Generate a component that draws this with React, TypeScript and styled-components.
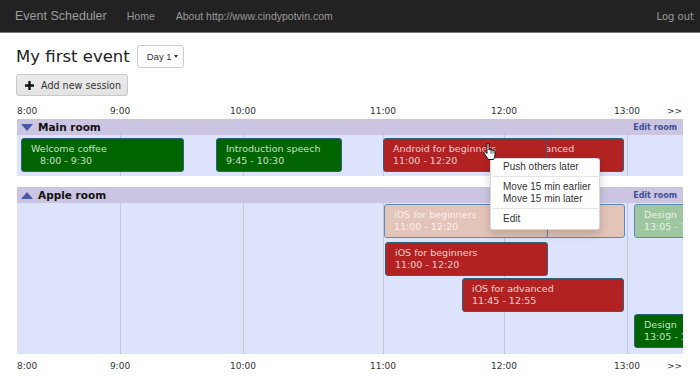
import React from "react";
import styled, { createGlobalStyle } from "styled-components";

const GlobalStyle = createGlobalStyle`
  html, body { margin: 0; padding: 0; background: #fff; }
  body {
    font-family: "DejaVu Sans", Verdana, sans-serif;
    width: 700px;
    height: 380px;
    overflow: hidden;
  }
`;

const Page = styled.div`
  position: relative;
  width: 700px;
  height: 380px;
`;

const Navbar = styled.nav`
  display: flex;
  align-items: center;
  height: 32px;
  background: #222;
  border-bottom: 1px solid #777;
  font-family: "Liberation Sans", Arial, sans-serif;
`;

const Brand = styled.span`
  padding-left: 15px;
  margin-right: 20px;
  font-size: 12.5px;
  color: #9d9d9d;
`;

const NavLink = styled.span`
  font-size: 10.5px;
  color: #999;
  margin-right: 21px;
`;

const LogOut = styled.span`
  margin-left: auto;
  padding-right: 6px;
  font-family: "DejaVu Sans", sans-serif;
  font-size: 10px;
  color: #999;
`;

const Content = styled.main`
  padding-left: 16px;
`;

const TitleRow = styled.div`
  display: flex;
  align-items: center;
  gap: 7px;
  margin-top: 12px;
  height: 23px;
`;

const Title = styled.h1`
  margin: 0;
  font-size: 16.5px;
  font-weight: normal;
  line-height: 23px;
  color: #222;
`;

const DayButton = styled.button`
  display: flex;
  align-items: center;
  gap: 1px;
  height: 23px;
  width: 47px;
  padding: 0 0 0 9px;
  background: #fff;
  border: 1px solid #ccc;
  border-radius: 3px;
  font-family: "Liberation Sans", Arial, sans-serif;
  font-size: 9.5px;
  color: #333;
`;

const Caret = styled.span`
  display: inline-block;
  width: 0;
  height: 0;
  margin-left: 1px;
  border-left: 2.5px solid transparent;
  border-right: 2.5px solid transparent;
  border-top: 3px solid #333;
`;

const AddButton = styled.button`
  display: flex;
  align-items: center;
  gap: 7px;
  margin-top: 6px;
  height: 22px;
  width: 112px;
  padding: 0 0 0 8px;
  background: linear-gradient(#ebebeb, #e3e3e3);
  border: 1px solid #c8c8c8;
  border-radius: 3px;
  font-family: "DejaVu Sans", sans-serif;
  font-size: 9.6px;
  color: #333;
`;

const Timeline = styled.div`
  position: relative;
  margin-left: 1px;
  width: 666px;
`;

const Axis = styled.div<{ $top: number }>`
  position: relative;
  margin-top: ${(p) => p.$top}px;
  height: 15px;
  font-size: 9px;
  line-height: 15px;
  color: #333;
`;

const AxisLabel = styled.span<{ $centered: boolean }>`
  position: absolute;
  top: 0;
  transform: ${(p) => (p.$centered ? "translateX(-50%)" : "none")};
`;

const Room = styled.section<{ $gap: number }>`
  margin-top: ${(p) => p.$gap}px;
`;

const RoomHeader = styled.div`
  display: flex;
  align-items: center;
  height: 16px;
  background: #ccc5e1;
  padding: 0 6px 0 4px;
`;

const Triangle = styled.span<{ $up: boolean }>`
  width: 0;
  height: 0;
  margin-right: 5px;
  border-left: 6px solid transparent;
  border-right: 6px solid transparent;
  ${(p) =>
    p.$up ? "border-bottom: 7px solid #4758a6;" : "border-top: 7px solid #4758a6;"}
`;

const RoomName = styled.span`
  font-weight: bold;
  font-size: 10.5px;
  color: #111;
`;

const EditRoom = styled.span`
  margin-left: auto;
  font-weight: bold;
  font-size: 8px;
  color: #3d4e9c;
`;

const RoomBody = styled.div<{ $h: number }>`
  position: relative;
  height: ${(p) => p.$h}px;
  background: #dde3fb;
  overflow: hidden;
`;

const GridLine = styled.div`
  position: absolute;
  top: 0;
  bottom: 0;
  width: 1px;
  background: #c3c8d8;
`;

type Kind = "green" | "red" | "fadedRed" | "fadedGreen";

const kindBg: Record<Kind, string> = {
  green: "#006400",
  red: "#b22222",
  fadedRed: "#e3c4b8",
  fadedGreen: "#9fc69f",
};

const Session = styled.div<{ $kind: Kind }>`
  position: absolute;
  height: 34px;
  box-sizing: border-box;
  padding: 4px 9px;
  border: 1px solid ${(p) => (p.$kind.startsWith("faded") ? "#5a8ab8" : "#30607a")};
  border-radius: 3px;
  background: ${(p) => kindBg[p.$kind]};
  color: ${(p) => (p.$kind.startsWith("faded") ? "rgba(255,255,255,0.8)" : "rgba(255,255,255,0.8)")};
  font-size: 9.5px;
  line-height: 12px;
  white-space: nowrap;
  overflow: hidden;
`;

const SessionLine = styled.div<{ $indent?: boolean }>`
  padding-left: ${(p) => (p.$indent ? "9px" : "0")};
`;

const Menu = styled.ul`
  position: absolute;
  left: 490px;
  top: 158px;
  width: 110px;
  box-sizing: border-box;
  margin: 0;
  padding: 2px 0 4px;
  list-style: none;
  background: #fff;
  border: 1px solid rgba(0, 0, 0, 0.15);
  border-radius: 3px;
  box-shadow: 0 4px 10px rgba(0, 0, 0, 0.18);
  font-family: "Liberation Sans", Arial, sans-serif;
  font-size: 10px;
  color: #333;
  z-index: 10;
`;

const MenuItem = styled.li`
  padding: 0 12px;
  line-height: 12px;
  white-space: nowrap;
`;

const MenuDivider = styled.li`
  height: 1px;
  margin: 3px 1px 4px;
  background: #e5e5e5;
`;

const Cursor = styled.svg`
  position: absolute;
  left: 483px;
  top: 143px;
  z-index: 11;
`;

const hours = [
  { label: "8:00", x: 0 },
  { label: "9:00", x: 103 },
  { label: "10:00", x: 226 },
  { label: "11:00", x: 366 },
  { label: "12:00", x: 487 },
  { label: "13:00", x: 610 },
];

type S = { title: string; time: string; left: number; width: number; top: number; kind: Kind; indent?: boolean };

const mainSessions: S[] = [
  { title: "Welcome coffee", time: "8:00 - 9:30", left: 4, width: 163, top: 3, kind: "green", indent: true },
  { title: "Introduction speech", time: "9:45 - 10:30", left: 199, width: 126, top: 3, kind: "green" },
  { title: "Android for advanced", time: "11:45 - 12:55", left: 445, width: 162, top: 3, kind: "red" },
  { title: "Android for beginners", time: "11:00 - 12:20", left: 366, width: 164, top: 3, kind: "red" },
];

const appleSessions: S[] = [
  { title: "", time: "", left: 445, width: 163, top: 1, kind: "fadedRed" },
  { title: "iOS for beginners", time: "11:00 - 12:20", left: 367, width: 164, top: 1, kind: "fadedRed" },
  { title: "Design", time: "13:05 - 14:00", left: 617, width: 70, top: 1, kind: "fadedGreen" },
  { title: "iOS for beginners", time: "11:00 - 12:20", left: 368, width: 163, top: 39, kind: "red" },
  { title: "iOS for advanced", time: "11:45 - 12:55", left: 445, width: 162, top: 75, kind: "red" },
  { title: "Design", time: "13:05 - 14:00", left: 617, width: 70, top: 111, kind: "green" },
];

function TimeAxis({ top }: { top: number }) {
  return (
    <Axis $top={top}>
      {hours.map((h, i) => (
        <AxisLabel key={h.label} $centered={i > 0} style={{ left: h.x }}>
          {h.label}
        </AxisLabel>
      ))}
      <AxisLabel $centered={false} style={{ left: 650 }}>
        &gt;&gt;
      </AxisLabel>
    </Axis>
  );
}

function RoomBlock({ name, up, height, gap, sessions }: { name: string; up: boolean; height: number; gap: number; sessions: S[] }) {
  return (
    <Room $gap={gap}>
      <RoomHeader>
        <Triangle $up={up} />
        <RoomName>{name}</RoomName>
        <EditRoom>Edit room</EditRoom>
      </RoomHeader>
      <RoomBody $h={height}>
        {hours.slice(1).map((h) => (
          <GridLine key={h.label} style={{ left: h.x }} />
        ))}
        {sessions.map((s, i) => (
          <Session key={i} $kind={s.kind} style={{ left: s.left, width: s.width, top: s.top }}>
            <SessionLine>{s.title}</SessionLine>
            <SessionLine $indent={s.indent}>{s.time}</SessionLine>
          </Session>
        ))}
      </RoomBody>
    </Room>
  );
}

export default function App() {
  return (
    <Page>
      <GlobalStyle />
      <Navbar>
        <Brand>Event Scheduler</Brand>
        <NavLink>Home</NavLink>
        <NavLink>About http://www.cindypotvin.com</NavLink>
        <LogOut>Log out</LogOut>
      </Navbar>
      <Content>
        <TitleRow>
          <Title>My first event</Title>
          <DayButton>
            Day 1<Caret />
          </DayButton>
        </TitleRow>
        <AddButton>
          <svg width="9" height="9" viewBox="0 0 9 9">
            <path d="M3.3 0h2.4v3.3H9v2.4H5.7V9H3.3V5.7H0V3.3h3.3z" fill="#111" />
          </svg>
          Add new session
        </AddButton>
        <Timeline>
          <TimeAxis top={8} />
          <RoomBlock name="Main room" up={false} height={41} gap={0} sessions={mainSessions} />
          <RoomBlock name="Apple room" up={true} height={151} gap={11} sessions={appleSessions} />
          <TimeAxis top={5} />
        </Timeline>
      </Content>
      <Menu>
        <MenuItem>Push others later</MenuItem>
        <MenuDivider />
        <MenuItem>Move 15 min earlier</MenuItem>
        <MenuItem>Move 15 min later</MenuItem>
        <MenuDivider />
        <MenuItem>Edit</MenuItem>
      </Menu>
      <Cursor width="14" height="18" viewBox="0 0 14 18">
        <path
          d="M4 1.5Q4 0.5 5 0.5Q6 0.5 6 1.5V7Q6 6 7 6Q8 6 8 7V7.5Q8 6.5 9 6.5Q10 6.5 10 7.5V8Q10 7 11 7Q12 7 12 8V12Q12 14.5 10.5 16.5H5.5Q4.5 15.5 3 13L1.2 10.3Q0.6 9.2 1.6 8.8Q2.4 8.5 3 9.2L4 10.5Z"
          fill="#fff"
          stroke="#000"
          strokeWidth="0.9"
          strokeLinejoin="round"
        />
        <path d="M8 7.5V10.5M10 8V10.5" stroke="#000" strokeWidth="0.7" />
      </Cursor>
    </Page>
  );
}
